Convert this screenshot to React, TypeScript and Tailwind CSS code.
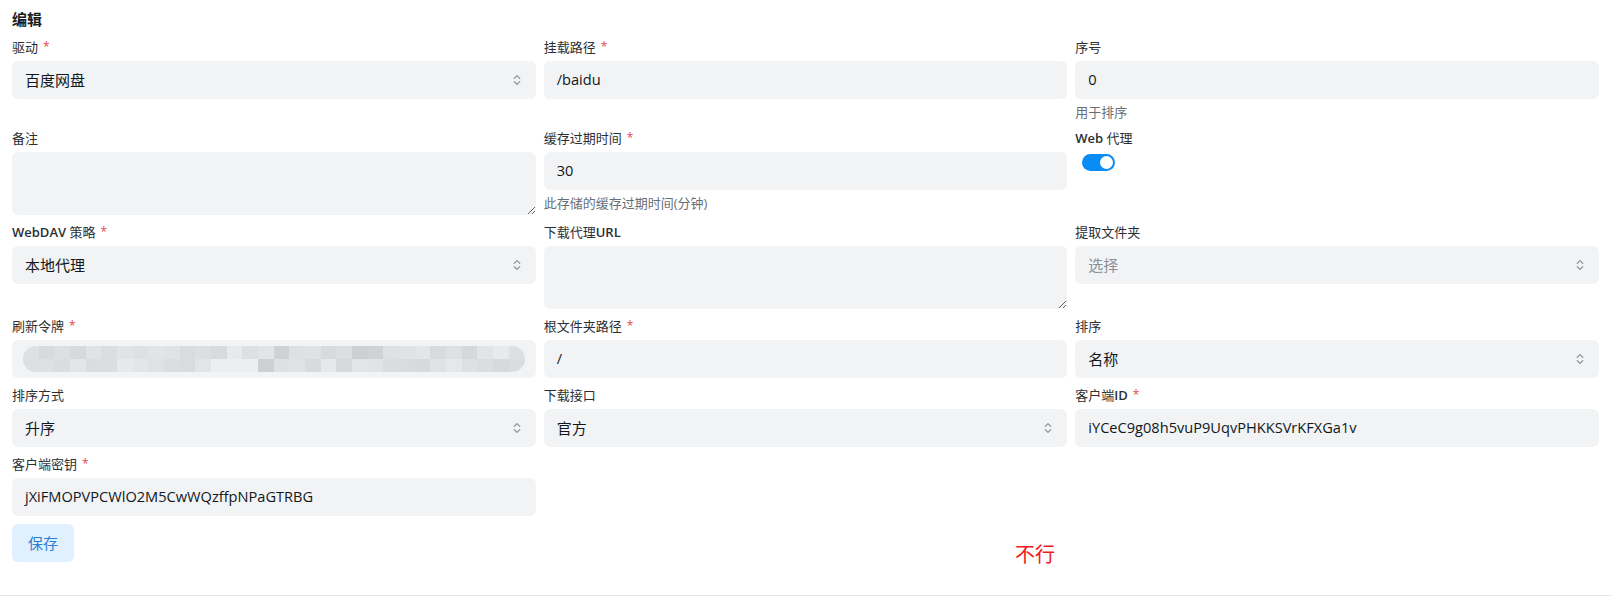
import React from "react";

const FONT = "font-['Open_Sans','Noto_Sans_CJK_SC',sans-serif]";

function Label({ children, required }: { children: React.ReactNode; required?: boolean }) {
  return (
    <div className="mb-1 flex h-5 items-center text-[13px] leading-5 text-[#2b2f33]">
      <span>{children}</span>
      {required && <span className="ml-[5px] text-[12px] text-[#e5484d]">*</span>}
    </div>
  );
}

function Latin({ children }: { children: React.ReactNode }) {
  return <span className="font-semibold">{children}</span>;
}

function Help({ children }: { children: React.ReactNode }) {
  return <div className="mt-1 text-[13px] leading-[18px] text-[#687076]">{children}</div>;
}

function Input({ value, placeholder }: { value?: string; placeholder?: string }) {
  return (
    <div className="flex h-[38px] items-center rounded-md bg-[#f1f3f5] pl-[13px] text-[14.6px] text-[#11181c]">
      {value ?? <span className="text-[#889096]">{placeholder}</span>}
    </div>
  );
}

function Chevron() {
  return (
    <svg width="8" height="12" viewBox="0 0 8 12" fill="none" stroke="#8a9199" strokeWidth="1.2" strokeLinecap="round" strokeLinejoin="round">
      <path d="M1.2 4.4 L4 1.6 L6.8 4.4" />
      <path d="M1.2 7.6 L4 10.4 L6.8 7.6" />
    </svg>
  );
}

function Select({ value, placeholder }: { value?: string; placeholder?: string }) {
  return (
    <div className="flex h-[38px] items-center justify-between rounded-md bg-[#f1f3f5] pl-[13px] pr-[15px] text-[15px] text-[#11181c]">
      {value ? <span>{value}</span> : <span className="text-[#889096]">{placeholder}</span>}
      <Chevron />
    </div>
  );
}

function Textarea() {
  return (
    <textarea className="block h-[63px] w-full rounded-md bg-[#f1f3f5] px-[13px] py-2 text-[15px] outline-none" />
  );
}

function Field({ label, required, children, help }: { label: React.ReactNode; required?: boolean; children: React.ReactNode; help?: string }) {
  return (
    <div className="flex flex-col">
      <Label required={required}>{label}</Label>
      {children}
      {help && <Help>{help}</Help>}
    </div>
  );
}

function Mosaic() {
  let seed = 7;
  const rand = () => {
    seed = (seed * 9301 + 49297) % 233280;
    return seed / 233280;
  };
  const cols = 32;
  const rows = [0, 1].map((r) =>
    Array.from({ length: cols }, (_, c) => {
      let v = 214 + Math.floor(rand() * 18);
      if (rand() > 0.88) v -= 10;
      if (r === 1 && c > 11 && c < 15) v = 236;
      return v;
    })
  );
  return (
    <div className="mx-[11px] flex h-[26px] flex-col overflow-hidden rounded-full">
      {rows.map((row, ri) => (
        <div key={ri} className="flex h-[13px]">
          {row.map((v, ci) => (
            <div key={ci} className="h-full flex-1" style={{ backgroundColor: `rgb(${v},${v + 2},${v + 4})` }} />
          ))}
        </div>
      ))}
    </div>
  );
}

export default function App() {
  return (
    <div className={`${FONT} relative h-[596px] border-b border-[#e6e8eb] bg-white px-3 pt-2`}>
      <div className="mb-[7px] h-[22px] text-[15px] font-bold leading-[22px] text-[#1a1d1f]">编辑</div>
      <div className="grid grid-cols-3 items-start gap-x-2 gap-y-[7px]">
        <Field label="驱动" required>
          <Select value="百度网盘" />
        </Field>
        <Field label="挂载路径" required>
          <Input value="/baidu" />
        </Field>
        <Field label="序号" help="用于排序">
          <Input value="0" />
        </Field>

        <Field label="备注">
          <Textarea />
        </Field>
        <Field label="缓存过期时间" required help="此存储的缓存过期时间(分钟)">
          <Input value="30" />
        </Field>
        <Field label={<><Latin>Web</Latin> 代理</>}>
          <div className="ml-[7px] mt-[2px] h-[17px] w-[33px] rounded-full bg-[#0a8cf5] p-[2px]">
            <div className="ml-auto h-[13px] w-[13px] rounded-full bg-white" />
          </div>
        </Field>

        <Field label={<><Latin>WebDAV</Latin> 策略</>} required>
          <Select value="本地代理" />
        </Field>
        <Field label={<>下载代理<Latin>URL</Latin></>}>
          <Textarea />
        </Field>
        <Field label="提取文件夹">
          <Select placeholder="选择" />
        </Field>

        <Field label="刷新令牌" required>
          <div className="flex h-[38px] flex-col justify-center rounded-md bg-[#f1f3f5]">
            <Mosaic />
          </div>
        </Field>
        <Field label="根文件夹路径" required>
          <Input value="/" />
        </Field>
        <Field label="排序">
          <Select value="名称" />
        </Field>

        <Field label="排序方式">
          <Select value="升序" />
        </Field>
        <Field label="下载接口">
          <Select value="官方" />
        </Field>
        <Field label={<>客户端<Latin>ID</Latin></>} required>
          <Input value="iYCeC9g08h5vuP9UqvPHKKSVrKFXGa1v" />
        </Field>

        <Field label="客户端密钥" required>
          <Input value="jXiFMOPVPCWlO2M5CwWQzffpNPaGTRBG" />
        </Field>
      </div>
      <button className="mt-2 h-[38px] rounded-md bg-[#e1f0ff] px-4 text-[15px] text-[#2a80d6]">保存</button>
      <div className="absolute left-[1015px] top-[541px] text-[20px] leading-7 text-[#f0191e]">不行</div>
    </div>
  );
}
